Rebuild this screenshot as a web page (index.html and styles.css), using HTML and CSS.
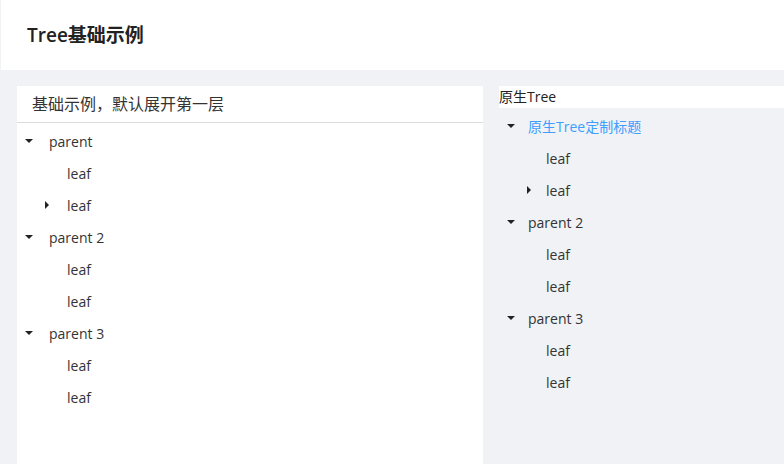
FILE: index.html
```html
<!DOCTYPE html>
<html lang="zh">
<head>
<meta charset="utf-8">
<title>Tree基础示例</title>
<link rel="stylesheet" href="styles.css">
</head>
<body>
<header class="page-header">Tree基础示例</header>
<main class="content">
  <section class="card">
    <div class="card-title">基础示例，默认展开第一层</div>
    <ul class="tree tree-basic">
      <li class="node"><span class="caret down"></span><span class="label">parent</span></li>
      <li class="node lvl1"><span class="caret none"></span><span class="label">leaf</span></li>
      <li class="node lvl1"><span class="caret right"></span><span class="label">leaf</span></li>
      <li class="node"><span class="caret down"></span><span class="label">parent 2</span></li>
      <li class="node lvl1"><span class="caret none"></span><span class="label">leaf</span></li>
      <li class="node lvl1"><span class="caret none"></span><span class="label">leaf</span></li>
      <li class="node"><span class="caret down"></span><span class="label">parent 3</span></li>
      <li class="node lvl1"><span class="caret none"></span><span class="label">leaf</span></li>
      <li class="node lvl1"><span class="caret none"></span><span class="label">leaf</span></li>
    </ul>
  </section>
  <section class="native">
    <div class="native-title">原生Tree</div>
    <ul class="tree tree-native">
      <li class="node"><span class="caret down"></span><span class="label custom">原生Tree定制标题</span></li>
      <li class="node lvl1"><span class="caret none"></span><span class="label">leaf</span></li>
      <li class="node lvl1"><span class="caret right"></span><span class="label">leaf</span></li>
      <li class="node"><span class="caret down"></span><span class="label">parent 2</span></li>
      <li class="node lvl1"><span class="caret none"></span><span class="label">leaf</span></li>
      <li class="node lvl1"><span class="caret none"></span><span class="label">leaf</span></li>
      <li class="node"><span class="caret down"></span><span class="label">parent 3</span></li>
      <li class="node lvl1"><span class="caret none"></span><span class="label">leaf</span></li>
      <li class="node lvl1"><span class="caret none"></span><span class="label">leaf</span></li>
    </ul>
  </section>
</main>
</body>
</html>
```

FILE: styles.css
```css
* { box-sizing: border-box; }
html, body { height: 100%; }
body {
  margin: 0;
  background: #f0f2f5;
  font-family: "Open Sans", "Noto Sans CJK SC", sans-serif;
  color: #333;
  display: flex;
  flex-direction: column;
  overflow: hidden;
}
.page-header {
  margin-left: 1px;
  height: 70px;
  background: #fff;
  padding: 0 0 2px 26px;
  display: flex;
  align-items: center;
  font-size: 19px;
  font-weight: 600;
  color: #222;
  flex: none;
}
.content {
  flex: 1;
  display: flex;
  padding: 16px 0 0 17px;
}
.card {
  width: 466px;
  background: #fff;
  flex: none;
}
.card-title {
  height: 37px;
  padding-left: 15px;
  font-size: 16px;
  line-height: 36px;
  border-bottom: 1px solid #dcdcdc;
}
.tree {
  list-style: none;
  margin: 0;
  padding: 0;
}
.tree-basic { padding-top: 2px; }
.node {
  height: 32px;
  display: flex;
  align-items: center;
  font-size: 14px;
}
.lvl1 { padding-left: 18px; }
.caret {
  width: 24px;
  height: 32px;
  flex: none;
  display: flex;
  align-items: center;
  justify-content: center;
}
.caret.down::before {
  content: "";
  border-left: 4px solid transparent;
  border-right: 4px solid transparent;
  border-top: 4px solid #222;
}
.caret.right::before {
  content: "";
  border-top: 4px solid transparent;
  border-bottom: 4px solid transparent;
  border-left: 4px solid #222;
}
.tree-basic .label { margin-left: 8px; }
.native {
  flex: 1;
  padding-left: 16px;
}
.native-title {
  height: 22px;
  background: #fff;
  font-size: 14px;
  line-height: 22px;
  color: #222;
}
.tree-native { padding-top: 2px; }
.tree-native .label { margin-left: 5px; }
.label.custom { color: #409eff; }
```
